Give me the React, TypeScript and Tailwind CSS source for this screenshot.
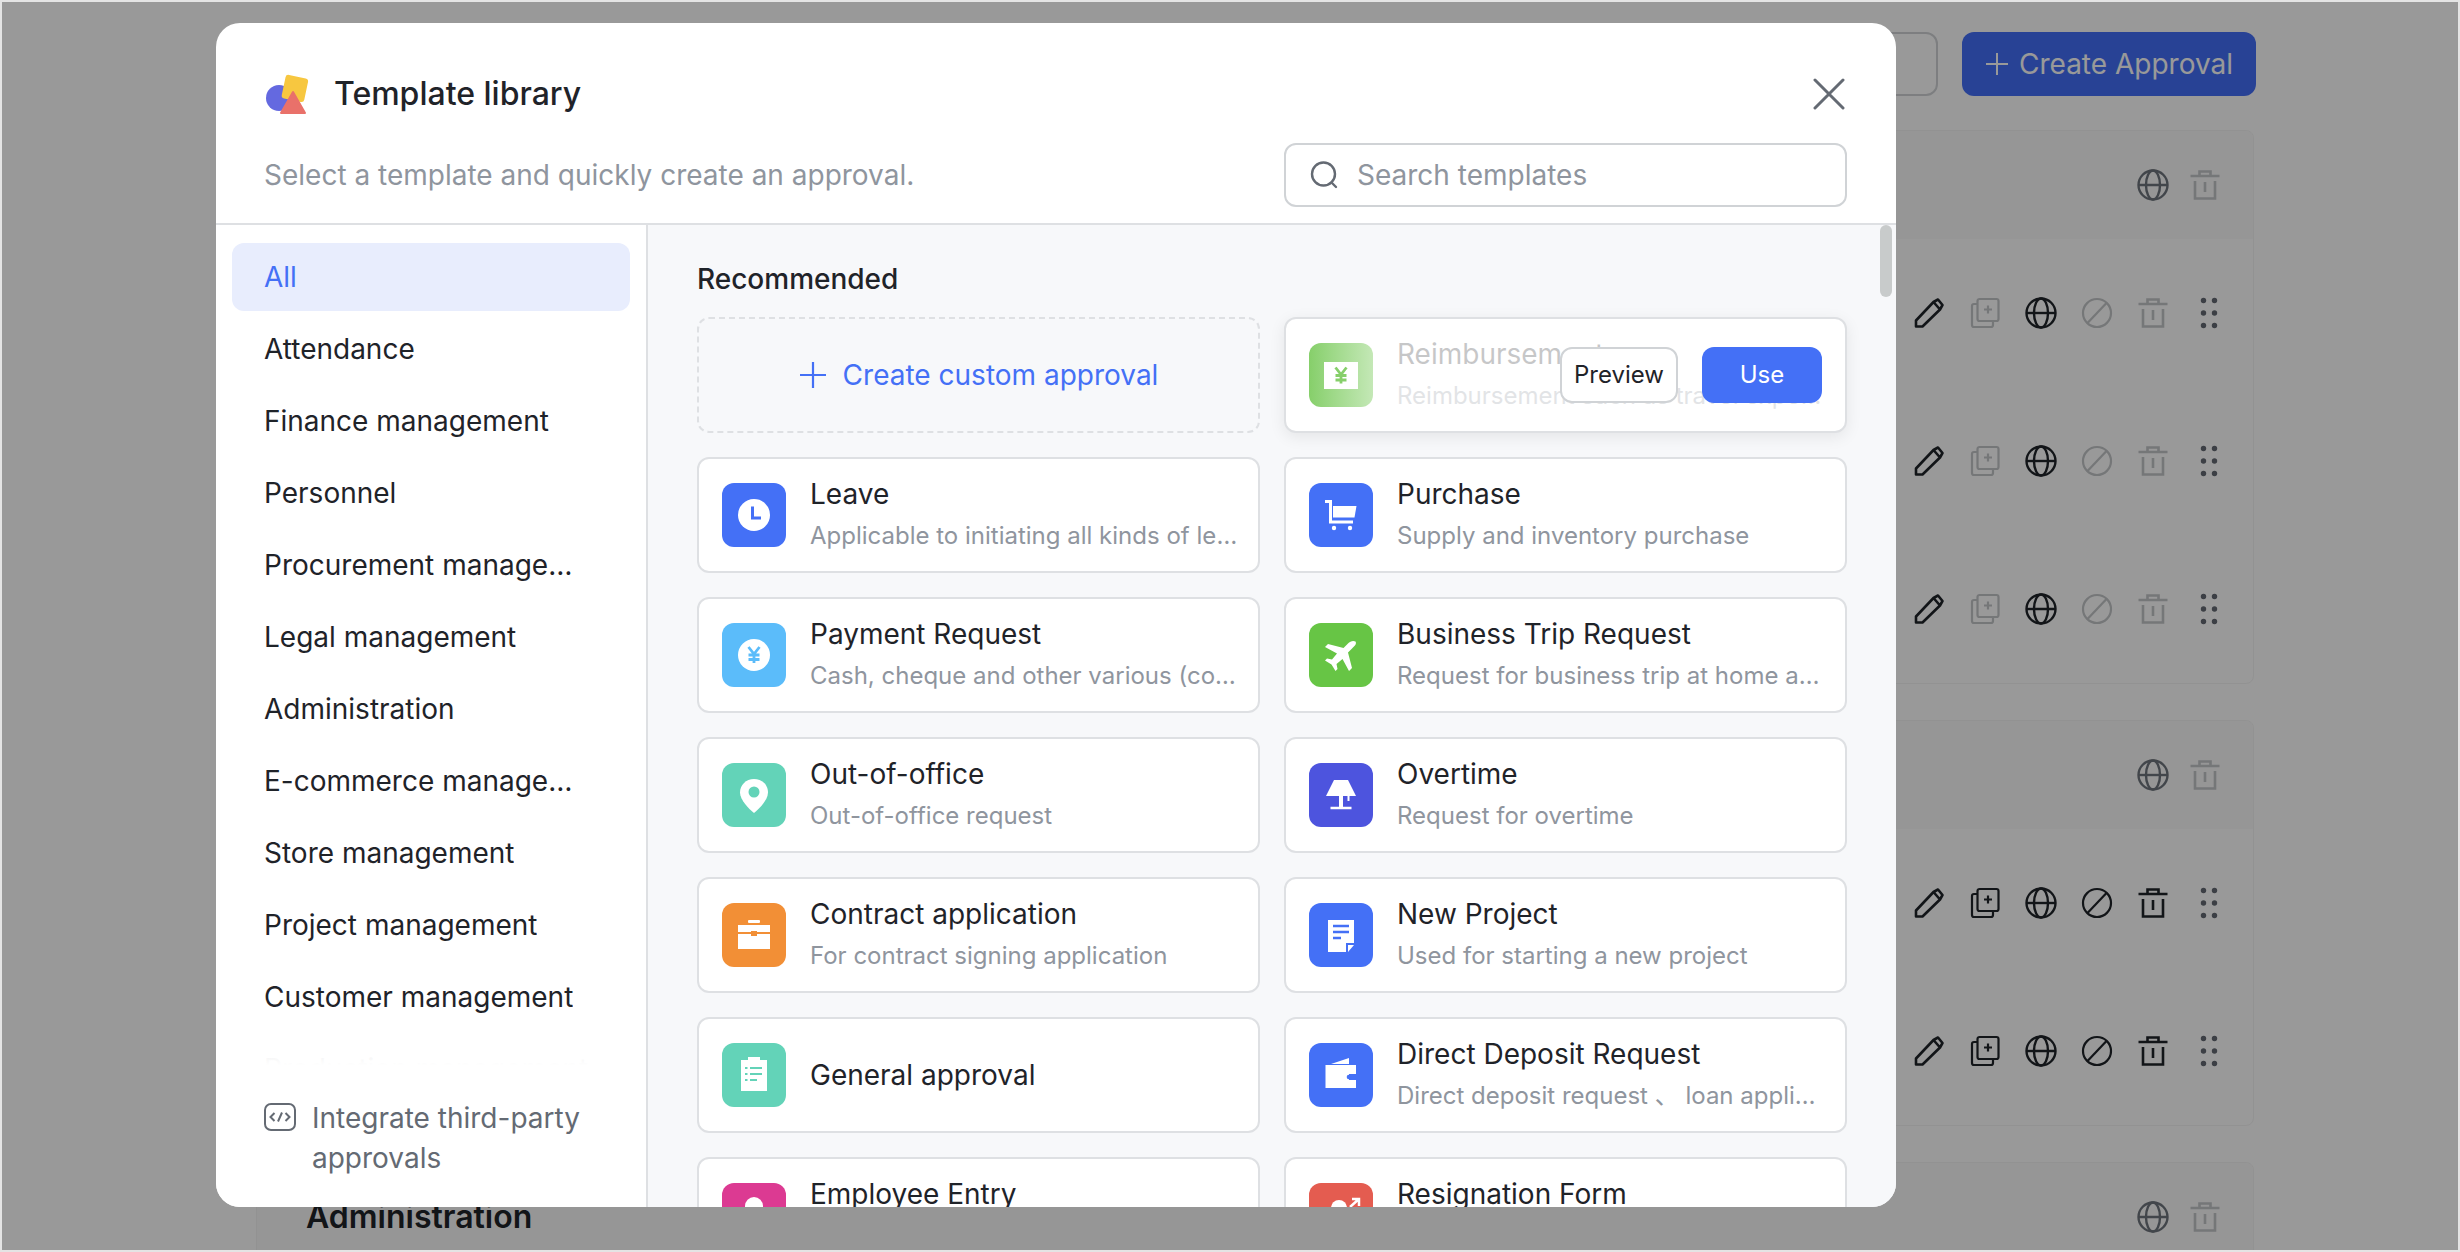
import type { ReactNode } from "react";

function Globe() {
  return (
    <svg viewBox="0 0 32 32" className="size-8" fill="none" stroke="currentColor" strokeWidth="2.4">
      <circle cx="16" cy="16" r="14.5" />
      <ellipse cx="16" cy="16" rx="7" ry="14.5" />
      <path d="M1.5 16h29" />
    </svg>
  );
}

function Trash() {
  return (
    <svg viewBox="0 0 32 32" className="size-8" fill="none" stroke="currentColor" strokeWidth="2.6">
      <path d="M1.5 7h29M10.5 7V2.5h11V7M6 12v17.5h20V12M16 13v10" />
    </svg>
  );
}

function Pencil() {
  return (
    <svg viewBox="0 0 32 32" className="size-8" fill="none" stroke="currentColor" strokeWidth="2.6" strokeLinejoin="round">
      <path d="M3 29.5v-6L20.5 5 25 2.5 29.5 8 27 12.5 9.5 29.5zM20.5 5 27 12.5" />
    </svg>
  );
}

function Duplicate() {
  return (
    <svg viewBox="0 0 32 32" className="size-8" fill="none" stroke="currentColor" strokeWidth="2.2">
      <rect x="8.5" y="2" width="21" height="22" rx="2" />
      <path d="M8 7H5a2 2 0 0 0-2 2v19a2 2 0 0 0 2 2h17a2 2 0 0 0 2-2v-4M19 8.5v8M15 12.5h8" />
    </svg>
  );
}

function Ban() {
  return (
    <svg viewBox="0 0 32 32" className="size-8" fill="none" stroke="currentColor" strokeWidth="2.2">
      <circle cx="16" cy="16" r="14" />
      <path d="M6.5 26 25.5 6" />
    </svg>
  );
}

function Dots() {
  return (
    <svg viewBox="0 0 32 32" className="size-8" fill="currentColor">
      <circle cx="10.5" cy="3.5" r="2.7" />
      <circle cx="21.5" cy="3.5" r="2.7" />
      <circle cx="10.5" cy="16" r="2.7" />
      <circle cx="21.5" cy="16" r="2.7" />
      <circle cx="10.5" cy="28.5" r="2.7" />
      <circle cx="21.5" cy="28.5" r="2.7" />
    </svg>
  );
}

function PanelHeader({ title }: { title?: string }) {
  return (
    <div className="flex h-[108px] items-center justify-between bg-[#fafafa] pl-[49px] pr-8">
      <span className="text-[32px] font-semibold text-[#1f2329]">{title}</span>
      <div className="flex items-center gap-5">
        <span className="text-[#6f757d]"><Globe /></span>
        <span className="text-[#c4c6c9]"><Trash /></span>
      </div>
    </div>
  );
}

function PanelRow({ disabled }: { disabled?: boolean }) {
  const muted = disabled ? "text-[#c4c6c9]" : "text-[#1f2329]";
  return (
    <div className="flex h-[148px] items-center justify-end gap-6 pr-7 text-[#1f2329]">
      <Pencil />
      <span className={muted}><Duplicate /></span>
      <Globe />
      <span className={muted}><Ban /></span>
      <span className={muted}><Trash /></span>
      <span className="text-[#646a73]"><Dots /></span>
    </div>
  );
}

function Background() {
  return (
    <div className="flex h-full flex-col pl-[254px] pr-[202px] pt-[30px]">
      <div className="flex justify-end gap-6">
        <div className="h-16 w-[200px] rounded-xl border-2 border-[#d0d3d6]" />
        <div className="flex h-16 w-[294px] items-center justify-center gap-2.5 rounded-xl bg-[#436ff8] text-[28px] text-white">
          <svg viewBox="0 0 24 24" className="size-6" fill="none" stroke="currentColor" strokeWidth="2"><path d="M12 1v22M1 12h22" /></svg>
          Create Approval
        </div>
      </div>
      <div className="mr-[2px] mt-[34px] flex flex-col gap-9">
        <div className="overflow-hidden rounded-lg border border-[#f4f4f4] bg-white">
          <PanelHeader />
          <PanelRow disabled />
          <PanelRow disabled />
          <PanelRow disabled />
        </div>
        <div className="overflow-hidden rounded-lg border border-[#f4f4f4] bg-white">
          <PanelHeader />
          <PanelRow />
          <PanelRow />
        </div>
        <div className="overflow-hidden rounded-lg border border-[#f4f4f4] bg-white">
          <PanelHeader title="Administration" />
        </div>
      </div>
    </div>
  );
}

function Yen({ color }: { color: string }) {
  return <path d="M26.5 24 32 31l5.5-7M26.5 32h11M26.5 36.5h11M32 31v9" fill="none" stroke={color} strokeWidth="2.8" />;
}

type Template = {
  title: string;
  desc?: string;
  bg: string;
  icon: ReactNode;
};

const templates: Template[] = [
  {
    title: "Leave",
    desc: "Applicable to initiating all kinds of leave requests",
    bg: "bg-[#4470f6]",
    icon: (
      <>
        <circle cx="32" cy="32" r="16" fill="#fff" />
        <path d="M30.5 23.5V35H39" fill="none" stroke="#4470f6" strokeWidth="3" />
      </>
    ),
  },
  {
    title: "Purchase",
    desc: "Supply and inventory purchase",
    bg: "bg-[#4470f6]",
    icon: (
      <>
        <path d="M16 18.5h5.5V39H44" fill="none" stroke="#fff" strokeWidth="3" />
        <path d="M24 23h23.5L45.5 34.5H24z" fill="#fff" />
        <circle cx="25" cy="45" r="2.2" fill="#fff" />
        <circle cx="41" cy="45" r="2.2" fill="#fff" />
      </>
    ),
  },
  {
    title: "Payment Request",
    desc: "Cash, cheque and other various (corporate) payment requests",
    bg: "bg-[#5bbcfa]",
    icon: (
      <>
        <circle cx="32" cy="32" r="16" fill="#fff" />
        <Yen color="#5bbcfa" />
      </>
    ),
  },
  {
    title: "Business Trip Request",
    desc: "Request for business trip at home and abroad",
    bg: "bg-[#67c545]",
    icon: (
      <path
        d="M46.5 18.5C44 17 41 18.5 39 20.5L34.5 25 19 21l-3 3 12 6.5-5 6-5-1-2 2 6.5 4 4 6.500 2-2-1-5 6-5 6.500 12 3-3-4-15.500 4.500-4.500c2-2 4.500-4 3-6.500z"
        fill="#fff"
      />
    ),
  },
  {
    title: "Out-of-office",
    desc: "Out-of-office request",
    bg: "bg-[#63d3b8]",
    icon: (
      <>
        <path d="M32 16c-8 0-14 6-14 13.500C18 37 27 46 32 50c5-4 14-13 14-20.500C46 22 40 16 32 16z" fill="#fff" />
        <circle cx="32" cy="29" r="5.500" fill="#63d3b8" />
      </>
    ),
  },
  {
    title: "Overtime",
    desc: "Request for overtime",
    bg: "bg-[#4d54de]",
    icon: (
      <>
        <path d="M25 17h14l8 16H17z" fill="#fff" />
        <path d="M30 33h4v11h-4z" fill="#fff" />
        <path d="M21.500 45h21" stroke="#fff" strokeWidth="2.500" />
        <path d="M39.500 33v5" stroke="#fff" strokeWidth="2" />
      </>
    ),
  },
  {
    title: "Contract application",
    desc: "For contract signing application",
    bg: "bg-[#f28f36]",
    icon: (
      <>
        <rect x="26" y="17" width="12" height="3" rx="1" fill="#fff" />
        <rect x="16" y="22" width="32" height="7" fill="#fff" />
        <rect x="16" y="31" width="32" height="15" fill="#fff" />
        <rect x="29" y="28" width="6" height="5" fill="#f28f36" />
      </>
    ),
  },
  {
    title: "New Project",
    desc: "Used for starting a new project",
    bg: "bg-[#4470f6]",
    icon: (
      <>
        <path d="M19 17h26v23h-8v9H19z" fill="#fff" />
        <path d="M39 42h6l-6 7z" fill="#fff" />
        <path d="M24 23h16M24 29h16M24 35h8" stroke="#4470f6" strokeWidth="2.500" />
      </>
    ),
  },
  {
    title: "General approval",
    bg: "bg-[#63d3b8]",
    icon: (
      <>
        <path d="M26 14h12v3h7v31H19V17h7z" fill="#fff" />
        <path d="M28 25h12M28 31h12M28 37h7" stroke="#63d3b8" strokeWidth="2.200" />
        <path d="M23 25h2.500M23 31h2.500M23 37h2.500" stroke="#63d3b8" strokeWidth="2.200" />
      </>
    ),
  },
  {
    title: "Direct Deposit Request",
    desc: "Direct deposit request 、 loan application",
    bg: "bg-[#4470f6]",
    icon: (
      <>
        <path d="M22 21 40 15v6z" fill="#fff" />
        <rect x="16.500" y="22" width="30.500" height="23" fill="#fff" />
        <rect x="40" y="31" width="7" height="6" fill="#4470f6" />
        <circle cx="40" cy="34" r="2.300" fill="#4470f6" />
      </>
    ),
  },
  {
    title: "Employee Entry",
    desc: "Employee onboarding request",
    bg: "bg-[#dc3a92]",
    icon: <circle cx="32" cy="23" r="9" fill="#fff" />,
  },
  {
    title: "Resignation Form",
    desc: "Employee resignation request",
    bg: "bg-[#e45c50]",
    icon: (
      <>
        <circle cx="30" cy="25" r="8" fill="#fff" />
        <path d="M41 24l9-8M43 16h7v7" fill="none" stroke="#fff" strokeWidth="2.500" />
      </>
    ),
  },
];

const categories = [
  "Attendance",
  "Finance management",
  "Personnel",
  "Procurement management",
  "Legal management",
  "Administration",
  "E-commerce management",
  "Store management",
  "Project management",
  "Customer management",
  "Production management",
];

function TemplateCard({ item }: { item: Template }) {
  return (
    <div className="flex h-[116px] items-center gap-6 rounded-xl border-2 border-[#dee0e3] bg-white pl-[23px] pr-5">
      <div className={`size-16 shrink-0 overflow-hidden rounded-xl ${item.bg}`}>
        <svg viewBox="0 0 64 64" className="size-16">{item.icon}</svg>
      </div>
      <div className="min-w-0 flex-1">
        <div className="truncate text-[28px] leading-10 text-[#1f2329]">{item.title}</div>
        {item.desc && <div className="mt-0.5 truncate text-2xl leading-10 text-[#8f959e]">{item.desc}</div>}
      </div>
    </div>
  );
}

function HoverCard() {
  return (
    <div className="relative flex h-[116px] items-center gap-6 overflow-hidden rounded-xl border-2 border-[#dee0e3] bg-white pl-[23px] pr-5 shadow-[0_4px_16px_rgba(0,0,0,0.08)]">
      <div className="size-16 shrink-0 overflow-hidden rounded-xl bg-linear-to-r from-[#86cf6a] to-[#c4e8b6]">
        <svg viewBox="0 0 64 64" className="size-16">
          <rect x="15" y="19" width="34" height="27" fill="#fff" />
          <g transform="translate(0 0.500)"><Yen color="#86cf6a" /></g>
        </svg>
      </div>
      <div className="min-w-0 flex-1">
        <div className="truncate text-[28px] leading-10 text-[#1f2329] opacity-25">Reimbursement</div>
        <div className="mt-0.5 truncate text-2xl leading-10 text-[#8f959e] opacity-25">Reimbursement such as travel expenses</div>
      </div>
      <div className="absolute right-[23px] top-1/2 flex -translate-y-1/2 items-center gap-6">
        <button className="h-14 w-[118px] rounded-xl border-2 border-[#d0d3d6] bg-white text-2xl text-[#1f2329]">Preview</button>
        <button className="h-14 w-[120px] rounded-xl bg-[#4470f6] text-2xl text-white">Use</button>
      </div>
    </div>
  );
}

function Sidebar() {
  return (
    <div className="flex w-[432px] shrink-0 flex-col border-r-2 border-[#dee0e3] bg-white">
      <div className="relative min-h-0 flex-1 overflow-hidden px-4 pt-[18px]">
        <div className="flex flex-col gap-1">
          <div className="flex h-[68px] items-center rounded-xl bg-[#e8edfd] px-8 text-[28px] text-[#4470f6]">All</div>
          {categories.map((c) => (
            <div key={c} className="flex h-[68px] shrink-0 items-center pl-8 pr-[34px] text-[28px] text-[#1f2329]">
              <span className="truncate">{c}</span>
            </div>
          ))}
        </div>
        <div className="absolute inset-x-0 bottom-0 h-10 bg-linear-to-t from-white via-white/90 to-transparent" />
      </div>
      <div className="flex h-[142px] shrink-0 items-start gap-4 pl-12 pt-[33px] text-[#646a73]">
        <svg viewBox="0 0 32 28" className="mt-[5px] h-7 w-8 shrink-0" fill="none" stroke="currentColor" strokeWidth="2">
          <rect x="1" y="1" width="30" height="26" rx="6" />
          <path d="M10.500 10 6.500 14l4 4M21.500 10l4 4-4 4M18 9.500l-4 9" />
        </svg>
        <span className="w-[300px] text-[28px] leading-10">Integrate third-party approvals</span>
      </div>
    </div>
  );
}

function Modal() {
  return (
    <div className="absolute left-[214px] top-[21px] flex h-[1184px] w-[1680px] flex-col overflow-hidden rounded-3xl bg-white">
      <div className="shrink-0 border-b-2 border-[#dee0e3] pb-4 pl-12 pr-[49px] pt-[50px]">
        <div className="flex h-[42px] items-center">
          <svg viewBox="0 0 46 44" className="h-11 w-[46px] shrink-0">
            <circle cx="15" cy="26" r="13" fill="#6469e0" />
            <rect x="19.500" y="4.500" width="23" height="24" rx="3" fill="#f7c740" transform="rotate(12 31 16)" />
            <path d="M29 20 17 41h24z" fill="#e9716a" stroke="#e9716a" strokeWidth="2" strokeLinejoin="round" />
          </svg>
          <span className="ml-6 text-[32px] font-medium text-[#1f2329]">Template library</span>
          <svg viewBox="0 0 32 32" className="ml-auto mr-[2px] size-8 text-[#646a73]" fill="none" stroke="currentColor" strokeWidth="3" strokeLinecap="round">
            <path d="M2 2l28 28M30 2 2 30" />
          </svg>
        </div>
        <div className="mt-7 flex items-center justify-between">
          <span className="text-[28px] text-[#8f959e]">Select a template and quickly create an approval.</span>
          <div className="flex h-16 w-[563px] items-center gap-[19px] rounded-xl border-2 border-[#d0d3d6] pl-6">
            <svg viewBox="0 0 28 28" className="size-7 text-[#646a73]" fill="none" stroke="currentColor" strokeWidth="2.400" strokeLinecap="round">
              <circle cx="13.500" cy="13" r="11.500" />
              <path d="M21.500 21.500 26 26" />
            </svg>
            <span className="text-[28px] text-[#8f959e]">Search templates</span>
          </div>
        </div>
      </div>
      <div className="flex min-h-0 flex-1">
        <Sidebar />
        <div className="relative min-w-0 flex-1 overflow-hidden bg-[#f7f8fa] pl-[49px] pr-[49px] pt-[34px]">
          <div className="mb-[18px] text-[28px] font-medium leading-10 text-[#1f2329]">Recommended</div>
          <div className="grid grid-cols-2 gap-6">
            <div className="flex h-[116px] items-center justify-center gap-4 rounded-xl border-2 border-dashed border-[#dee0e3] text-[28px] text-[#4470f6]">
              <svg viewBox="0 0 28 28" className="size-7" fill="none" stroke="currentColor" strokeWidth="2.200"><path d="M14 1v26M1 14h26" /></svg>
              Create custom approval
            </div>
            <HoverCard />
            {templates.map((t) => (
              <TemplateCard key={t.title} item={t} />
            ))}
          </div>
          <div className="absolute right-1 top-0 h-[72px] w-3 rounded-full bg-[#c8cbcb]" />
        </div>
      </div>
    </div>
  );
}

export default function App() {
  return (
    <div className="h-[1252px] overflow-hidden bg-[#e4e4e4] p-[2px] [font-family:Inter,'Noto_Sans_CJK_SC',sans-serif]">
      <div className="relative h-full overflow-hidden bg-white">
        <Background />
        <div className="absolute inset-0 bg-black/40" />
        <Modal />
      </div>
    </div>
  );
}
